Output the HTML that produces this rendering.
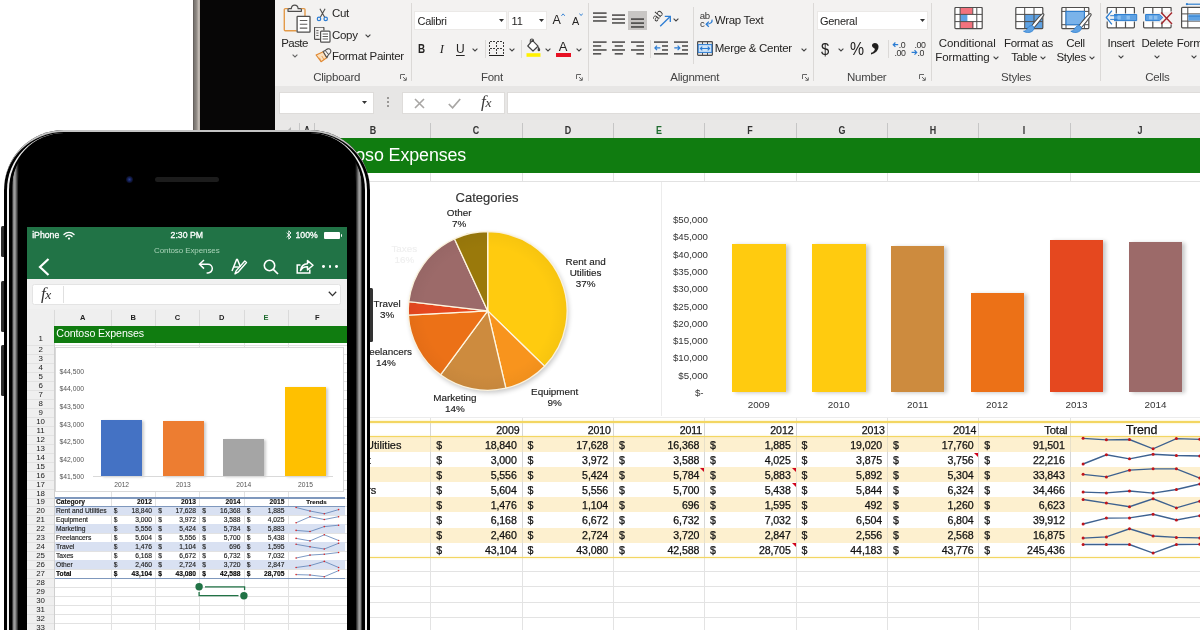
<!DOCTYPE html><html lang="en"><head><meta charset="utf-8"><title>Excel – Contoso Expenses</title><style>
*{box-sizing:border-box;margin:0;padding:0}
html,body{width:1200px;height:630px;overflow:hidden;background:#fff}
body{position:relative;font-family:"Liberation Sans",sans-serif;color:#222}
.abs{position:absolute}
#bezel{position:absolute;left:192.900px;top:0;width:83px;height:200px;background:#070606}
#bezel:before{content:"";position:absolute;left:0;top:0;width:7.600px;height:100%;background:linear-gradient(90deg,#4e4a48 0,#77726e 12%,#8b8681 45%,#a8a19b 65%,#c9c2bb 85%,#b5aea8 94%,#333 100%)}
#xl{will-change:transform;position:absolute;left:275px;top:0;width:925px;height:630px;background:#fff;overflow:hidden}
#ribbon{position:absolute;left:0;top:0;width:925px;height:86px;background:#f3f2f1}
#fbar{position:absolute;left:0;top:86px;width:925px;height:34px;background:#e7e6e5}
#colh{position:absolute;left:0;top:120px;width:925px;height:18px;background:#e9e8e7}
.rt{position:absolute;font-size:11.5px;letter-spacing:-.3px;color:#252423;white-space:nowrap;line-height:14px}
.rl{position:absolute;font-size:11.5px;letter-spacing:-.25px;color:#444;white-space:nowrap;line-height:14px;text-align:center;transform:translateX(-50%)}
.rc{position:absolute;font-size:11.5px;letter-spacing:-.3px;color:#252423;white-space:nowrap;line-height:14.6px;text-align:center;transform:translateX(-50%)}
.vsep{position:absolute;width:1px;background:#dbd9d7}
.box{position:absolute;background:#fff;border:1px solid #ebe9e7}
.ch{position:absolute;font-size:10.400px;color:#3a3a3a;transform:translateX(-50%) scaleX(.86);line-height:18px;top:2.300px;font-weight:bold;letter-spacing:-.2px}
.gl{position:absolute;background:#dcdcdc}
.num{position:absolute;font-size:10.6px;color:#111;white-space:nowrap;line-height:15px;letter-spacing:-.1px;margin-top:.9px;-webkit-text-stroke:.25px #111}
.cl{position:absolute;font-size:9.9px;color:#333;white-space:nowrap;line-height:11px;text-align:center;transform:translate(-50%,-50%)}
.pl{position:absolute;font-size:9.9px;color:#1a1a1a;-webkit-text-stroke:.15px;white-space:nowrap;line-height:11.1px;text-align:center;transform:translateX(-50%)}
#phone{position:absolute;left:4px;top:130px;width:366px;height:560px;border-radius:60px;background:#000}
#scr{will-change:transform;position:absolute;left:27px;top:227px;width:319.5px;height:410px;background:#fff;overflow:hidden}
.pt{position:absolute;white-space:nowrap}
.prn{position:absolute;left:0;width:27px;text-align:center;font-size:7.900px;color:#222;line-height:9px;letter-spacing:-.2px}
.pc{position:absolute;font-size:6.7px;line-height:9px;color:#222;white-space:nowrap;-webkit-text-stroke:.15px #222}
</style></head><body>
<div id="bezel"></div>
<div id="xl">
<div id="ribbon">
<div class="vsep" style="left:135.5px;top:3px;height:78px"></div>
<div class="vsep" style="left:313px;top:3px;height:78px"></div>
<div class="vsep" style="left:418.3px;top:7px;height:57px"></div>
<div class="vsep" style="left:538.3px;top:3px;height:78px"></div>
<div class="vsep" style="left:656.2px;top:3px;height:78px"></div>
<div class="vsep" style="left:825px;top:3px;height:78px"></div>
<div class="vsep" style="left:209.7px;top:40px;height:18px"></div>
<div class="vsep" style="left:245.7px;top:40px;height:18px"></div>
<div class="vsep" style="left:375px;top:40px;height:18px"></div>
<div class="vsep" style="left:613px;top:40px;height:18px"></div>
<svg class="abs" style="left:8px;top:3px" width="30" height="32" viewBox="0 0 30 32">
<path d="M5.500 5.600H2.300a1 1 0 0 0-1 1V26.700a1 1 0 0 0 1 1H13.500" fill="none" stroke="#e39a49" stroke-width="1.400"/>
<path d="M18 5.600h3a1 1 0 0 1 1 1V13" fill="none" stroke="#e39a49" stroke-width="1.400"/>
<path d="M5 8.300V6.600a1 1 0 0 1 1-1h2.300c.2-2.200 1.600-3.400 3.400-3.400s3.200 1.200 3.400 3.400h2.300a1 1 0 0 1 1 1V8.300z" fill="#f3f2f1" stroke="#4f4e4d" stroke-width="1.200" stroke-linejoin="round"/>
<rect x="14.100" y="13.400" width="12.900" height="15.700" rx=".6" fill="#fff" stroke="#4f4e4d" stroke-width="1.300"/>
<path d="M16.800 17.500h7.500M16.800 21.300h7.500M16.800 25.100h7.500" stroke="#605e5c" stroke-width="1.100"/>
</svg>
<div class="rc" style="left:19.5px;top:35.5px;letter-spacing:-.55px">Paste</div>
<svg class="abs" style="left:16.5px;top:54px" width="6" height="4" viewBox="0 0 6 4"><path d="M.6.6 3 3 5.4.6" fill="none" stroke="#666" stroke-width="1.1"/></svg>
<svg class="abs" style="left:41px;top:7.500px" width="13" height="14" viewBox="0 0 13 14">
<path d="M3.900.7 8.800 9.500M9.100.7 4.200 9.500" stroke="#4f4e4d" stroke-width="1.100" fill="none"/>
<circle cx="3" cy="10.900" r="1.700" fill="none" stroke="#2b7cd3" stroke-width="1.200"/><circle cx="9.700" cy="10.900" r="1.700" fill="none" stroke="#2b7cd3" stroke-width="1.200"/></svg>
<div class="rt" style="left:57px;top:6.3px">Cut</div>
<svg class="abs" style="left:39px;top:27px" width="17" height="16" viewBox="0 0 17 16">
<path d="M5.800 12.400H1.400a.9.900 0 0 1-.9-.9V1.100a.9.900 0 0 1 .9-.9H9a.9.900 0 0 1 .9.900V3.400" fill="none" stroke="#4f4e4d" stroke-width="1.200"/>
<rect x="6.600" y="4.100" width="9.400" height="11.100" rx=".9" fill="#fff" stroke="#4f4e4d" stroke-width="1.200"/>
<path d="M8.600 7h5.400M8.600 9.500h5.400M8.600 12h5.400" stroke="#605e5c" stroke-width="1"/>
<path d="M2.300 3.600h2.200M2.300 6h2.200M2.300 8.500h2.200" stroke="#605e5c" stroke-width="1"/></svg>
<div class="rt" style="left:57px;top:28.3px">Copy</div>
<svg class="abs" style="left:90px;top:33.5px" width="6" height="4" viewBox="0 0 6 4"><path d="M.6.6 3 3 5.4.6" fill="none" stroke="#444" stroke-width="1.1"/></svg>
<svg class="abs" style="left:40px;top:48px" width="17" height="15" viewBox="0 0 17 15">
<path d="M1.100 7 8.300 3.700 11.700 9.800 6.100 13.700z" fill="#fbe0bd" stroke="#e08a35" stroke-width="1.200" stroke-linejoin="round"/>
<path d="M4.500 9.800 6.100 13.700M6.800 8 9 11.700" stroke="#e08a35" stroke-width=".7"/>
<path d="M8.100 3.500 10.300 2.500C11.400.9 14.300.1 15.400 1.700 16.400 3.200 15.400 5.700 13.500 6.500L11.900 9.700z" fill="#f3f2f1" stroke="#4f4e4d" stroke-width="1.100" stroke-linejoin="round"/>
<path d="M10.300 2.500 13.500 6.500" stroke="#4f4e4d" stroke-width="1"/></svg>
<div class="rt" style="left:57px;top:49.3px">Format Painter</div>
<div class="rl" style="left:61.7px;top:70px">Clipboard</div>
<svg class="abs" style="left:124.80000000000001px;top:73.5px" width="7" height="7" viewBox="0 0 7 7"><path d="M.5 5V.5H5" fill="none" stroke="#666" stroke-width="1"/><path d="M3 3l3 3M6.3 3.4v2.9H3.4" fill="none" stroke="#666" stroke-width="1"/></svg>
<div class="box" style="left:139px;top:11px;width:93px;height:19px"></div>
<div class="box" style="left:233px;top:11px;width:38.5px;height:19px"></div>
<div class="rt" style="left:142.5px;top:13.5px;font-size:11px">Calibri</div>
<div class="rt" style="left:236.5px;top:13.5px;font-size:11px;letter-spacing:0">11</div>
<svg class="abs" style="left:223.5px;top:18.5px" width="5" height="3" viewBox="0 0 5 3"><path d="M0 0h5L2.5 3z" fill="#333"/></svg>
<svg class="abs" style="left:263.5px;top:18.5px" width="5" height="3" viewBox="0 0 5 3"><path d="M0 0h5L2.5 3z" fill="#333"/></svg>
<div class="rt" style="left:277.5px;top:11.5px;font-size:12.500px;letter-spacing:0;line-height:16px">A</div>
<svg class="abs" style="left:286px;top:12.500px" width="4.2" height="3.4" viewBox="0 0 5 4"><path d="M.5 3.4 2.5 1 4.5 3.4" fill="none" stroke="#2b7cd3" stroke-width="1.1"/></svg>
<div class="rt" style="left:297px;top:12.500px;font-size:10.800px;letter-spacing:0;line-height:16px">A</div>
<svg class="abs" style="left:304px;top:12.500px" width="4.2" height="3.4" viewBox="0 0 5 4"><path d="M.5.6 2.5 3 4.5.6" fill="none" stroke="#2b7cd3" stroke-width="1.1"/></svg>
<div class="rt" style="left:143.3px;top:41.5px;font-size:12.300px;font-weight:bold;letter-spacing:0;transform:scaleX(.8);transform-origin:0 0">B</div>
<div class="rt" style="left:164.8px;top:41.5px;font-size:12.5px;font-style:italic;letter-spacing:0;font-family:'Liberation Serif',serif">I</div>
<div class="rt" style="left:181px;top:41.5px;font-size:12px;letter-spacing:0;text-decoration:underline;text-underline-offset:2px">U</div>
<svg class="abs" style="left:197.3px;top:47.5px" width="6" height="4" viewBox="0 0 6 4"><path d="M.6.6 3 3 5.4.6" fill="none" stroke="#444" stroke-width="1.1"/></svg>
<svg class="abs" style="left:214px;top:41px" width="15" height="15" viewBox="0 0 15 15" shape-rendering="crispEdges">
<path d="M.5.5H14.500M.5.5V14M14.500.5V14M7.500.5V14M.5 7.500H14.500" fill="none" stroke="#3b3a39" stroke-width="1" stroke-dasharray="2 1.500"/>
<path d="M0 14.200H15" stroke="#201f1e" stroke-width="1.400"/></svg>
<svg class="abs" style="left:233.9px;top:47.5px" width="6" height="4" viewBox="0 0 6 4"><path d="M.6.6 3 3 5.4.6" fill="none" stroke="#444" stroke-width="1.1"/></svg>
<svg class="abs" style="left:251px;top:38px" width="16" height="20" viewBox="0 0 16 20">
<path d="M6.4 2.4 12 8.2 7 13 1.8 8z" fill="#fff" stroke="#444" stroke-width="1.2" stroke-linejoin="round"/>
<path d="M4.3 5.3V2.6a1.6 1.6 0 0 1 3.2 0v.6" fill="none" stroke="#444" stroke-width="1.1"/>
<path d="M12.4 8.6c1.2 1.6 1.8 2.6 1.8 3.4a1.3 1.3 0 0 1-2.6 0c0-.8.3-1.7.8-3.4z" fill="#444"/>
<rect x="0.5" y="15.2" width="14" height="3.6" fill="#fff100"/></svg>
<svg class="abs" style="left:270px;top:47.5px" width="6" height="4" viewBox="0 0 6 4"><path d="M.6.6 3 3 5.4.6" fill="none" stroke="#444" stroke-width="1.1"/></svg>
<div class="rt" style="left:283.8px;top:39px;font-size:13px;letter-spacing:0;line-height:15px">A</div>
<div class="abs" style="left:281px;top:53.2px;width:14.5px;height:3.6px;background:#e81123"></div>
<svg class="abs" style="left:300.8px;top:47.5px" width="6" height="4" viewBox="0 0 6 4"><path d="M.6.6 3 3 5.4.6" fill="none" stroke="#444" stroke-width="1.1"/></svg>
<div class="rl" style="left:216.9px;top:70px">Font</div>
<svg class="abs" style="left:300.8px;top:73.5px" width="7" height="7" viewBox="0 0 7 7"><path d="M.5 5V.5H5" fill="none" stroke="#666" stroke-width="1"/><path d="M3 3l3 3M6.3 3.4v2.9H3.4" fill="none" stroke="#666" stroke-width="1"/></svg>
<div class="abs" style="left:353px;top:10.5px;width:19px;height:19px;background:#c8c6c4"></div>
<svg class="abs" style="left:318.20px;top:10.90px" width="13.6" height="11.9" viewBox="0 0 13.6 11.9"><rect x="0" y="1.45" width="13.6" height="1.250" fill="#252423"/><rect x="0" y="5.45" width="13.6" height="1.250" fill="#252423"/><rect x="0" y="9.35" width="13.6" height="1.250" fill="#252423"/></svg>
<svg class="abs" style="left:336.90px;top:13.00px" width="13.6" height="11.9" viewBox="0 0 13.6 11.9"><rect x="0" y="1.45" width="13.6" height="1.250" fill="#252423"/><rect x="0" y="5.45" width="13.6" height="1.250" fill="#252423"/><rect x="0" y="9.35" width="13.6" height="1.250" fill="#252423"/></svg>
<svg class="abs" style="left:355.50px;top:16.60px" width="13.6" height="11.9" viewBox="0 0 13.6 11.9"><rect x="0" y="1.45" width="13.6" height="1.250" fill="#252423"/><rect x="0" y="5.45" width="13.6" height="1.250" fill="#252423"/><rect x="0" y="9.35" width="13.6" height="1.250" fill="#252423"/></svg>
<svg class="abs" style="left:318.20px;top:40.10px" width="13.6" height="15.8" viewBox="0 0 13.6 15.8"><rect x="0" y="1.45" width="13.6" height="1.250" fill="#252423"/><rect x="0" y="5.35" width="8.2" height="1.250" fill="#252423"/><rect x="0" y="9.35" width="13.6" height="1.250" fill="#252423"/><rect x="0" y="13.25" width="8.2" height="1.250" fill="#252423"/></svg>
<svg class="abs" style="left:336.90px;top:40.10px" width="13.6" height="15.8" viewBox="0 0 13.6 15.8"><rect x="0" y="1.45" width="13.6" height="1.250" fill="#252423"/><rect x="2.7" y="5.35" width="8.2" height="1.250" fill="#252423"/><rect x="0" y="9.35" width="13.6" height="1.250" fill="#252423"/><rect x="2.7" y="13.25" width="8.2" height="1.250" fill="#252423"/></svg>
<svg class="abs" style="left:355.50px;top:40.10px" width="13.6" height="15.8" viewBox="0 0 13.6 15.8"><rect x="0" y="1.45" width="13.6" height="1.250" fill="#252423"/><rect x="5.4" y="5.35" width="8.2" height="1.250" fill="#252423"/><rect x="0" y="9.35" width="13.6" height="1.250" fill="#252423"/><rect x="5.4" y="13.25" width="8.2" height="1.250" fill="#252423"/></svg>
<svg class="abs" style="left:377px;top:9px" width="20" height="20" viewBox="0 0 20 20">
<text x="0" y="0" font-family="Liberation Sans,sans-serif" font-size="10.500" fill="#323130" transform="translate(4.200 13.300) rotate(-50)">ab</text>
<path d="M8.200 17.300 17.700 8" stroke="#2b7cd3" stroke-width="1.300" fill="none"/><path d="M12.800 7.400h5.500v5.500" stroke="#2b7cd3" stroke-width="1.300" fill="none"/></svg>
<svg class="abs" style="left:397.5px;top:18px" width="6" height="4" viewBox="0 0 6 4"><path d="M.6.6 3 3 5.4.6" fill="none" stroke="#444" stroke-width="1.1"/></svg>
<svg class="abs" style="left:379.3px;top:40.1px" width="14" height="16" viewBox="0 0 14 16"><rect x="0" y="1.450" width="14" height="1.250" fill="#252423"/><rect x="0" y="13.250" width="14" height="1.250" fill="#252423"/><rect x="8" y="5.350" width="6" height="1.250" fill="#252423"/><rect x="8" y="9.350" width="6" height="1.250" fill="#252423"/><path d="M6.300 7.900H.9M3 5.700.9 7.900 3 10.100" fill="none" stroke="#2b7cd3" stroke-width="1.200"/></svg>
<svg class="abs" style="left:398.8px;top:40.1px" width="14" height="16" viewBox="0 0 14 16"><rect x="0" y="1.450" width="14" height="1.250" fill="#252423"/><rect x="0" y="13.250" width="14" height="1.250" fill="#252423"/><rect x="8" y="5.350" width="6" height="1.250" fill="#252423"/><rect x="8" y="9.350" width="6" height="1.250" fill="#252423"/><path d="M.3 7.900H5.800M3.600 5.700 5.800 7.900 3.600 10.100" fill="none" stroke="#2b7cd3" stroke-width="1.200"/></svg>
<svg class="abs" style="left:424px;top:11px" width="17" height="18" viewBox="0 0 17 18">
<text x="0.700" y="8.400" font-family="Liberation Sans,sans-serif" font-size="9.600" fill="#323130" letter-spacing="-.3">ab</text>
<text x="0.900" y="15.600" font-family="Liberation Sans,sans-serif" font-size="9.600" fill="#323130">c</text>
<path d="M13 8.600c.6 2.600-1.600 4.600-5.600 4.600" fill="none" stroke="#2b7cd3" stroke-width="1.300"/><path d="M9.800 10.600 7.200 13.200 9.800 15.800" fill="none" stroke="#2b7cd3" stroke-width="1.300"/></svg>
<div class="rt" style="left:439.8px;top:13px">Wrap Text</div>
<svg class="abs" style="left:421.5px;top:41px" width="16" height="15" viewBox="0 0 16 15">
<rect x=".6" y=".6" width="14.800" height="13.800" rx=".8" fill="#e8e6e4" stroke="#4f4e4d" stroke-width="1.200"/>
<path d="M5.500.6V3.600M10.500.6V3.600M5.500 11.400v3M10.500 11.400v3" stroke="#4f4e4d" stroke-width="1"/>
<rect x="1.200" y="3.600" width="13.600" height="7.800" fill="#cfe4f8" stroke="#2b7cd3" stroke-width="1"/>
<path d="M3.400 7.500h9.200M5.300 5.700 3.400 7.500 5.300 9.300M10.700 5.700 12.600 7.500 10.700 9.300" fill="none" stroke="#2b7cd3" stroke-width="1.100"/></svg>
<div class="rt" style="left:439.8px;top:41.3px">Merge &amp; Center</div>
<svg class="abs" style="left:525.5px;top:47.5px" width="6" height="4" viewBox="0 0 6 4"><path d="M.6.6 3 3 5.4.6" fill="none" stroke="#444" stroke-width="1.1"/></svg>
<div class="rl" style="left:419.7px;top:70px">Alignment</div>
<svg class="abs" style="left:526.8px;top:73.5px" width="7" height="7" viewBox="0 0 7 7"><path d="M.5 5V.5H5" fill="none" stroke="#666" stroke-width="1"/><path d="M3 3l3 3M6.3 3.4v2.9H3.4" fill="none" stroke="#666" stroke-width="1"/></svg>
<div class="box" style="left:542.3px;top:11px;width:110.5px;height:19px"></div>
<div class="rt" style="left:545px;top:13.5px;font-size:11px">General</div>
<svg class="abs" style="left:645.0px;top:18.5px" width="5" height="3" viewBox="0 0 5 3"><path d="M0 0h5L2.5 3z" fill="#333"/></svg>
<div class="rt" style="left:546px;top:38.5px;font-size:16.500px;letter-spacing:0;line-height:20px;transform:scaleX(.9);transform-origin:0 0">$</div>
<svg class="abs" style="left:563.3px;top:47.5px" width="6" height="4" viewBox="0 0 6 4"><path d="M.6.6 3 3 5.4.6" fill="none" stroke="#444" stroke-width="1.1"/></svg>
<div class="rt" style="left:574.7px;top:38.5px;font-size:18px;letter-spacing:0;line-height:20px;transform:scaleX(.88);transform-origin:0 0">%</div>
<div class="rt" style="left:595.5px;top:17px;font-size:38px;letter-spacing:0;line-height:38px;font-family:'Liberation Serif',serif;font-weight:bold;color:#201f1e">,</div>
<svg class="abs" style="left:617px;top:40.5px" width="17" height="16" viewBox="0 0 17 16"><path d="M6.200 3.700H1.300M3.400 1.500 1.200 3.700 3.400 5.900" fill="none" stroke="#2b7cd3" stroke-width="1.200"/><text x="6.800" y="6.900" font-family="Liberation Sans,sans-serif" font-size="8.800" fill="#323130" letter-spacing="-.4">.0</text><text x="2.400" y="14.600" font-family="Liberation Sans,sans-serif" font-size="8.800" fill="#323130" letter-spacing="-.4">.00</text></svg>
<svg class="abs" style="left:635.7px;top:40.5px" width="17" height="16" viewBox="0 0 17 16"><text x="3.400" y="6.900" font-family="Liberation Sans,sans-serif" font-size="8.800" fill="#323130" letter-spacing="-.4">.00</text><path d="M.6 11.400H5.600M3.500 9.200 5.700 11.400 3.500 13.600" fill="none" stroke="#2b7cd3" stroke-width="1.200"/><text x="6.400" y="14.600" font-family="Liberation Sans,sans-serif" font-size="8.800" fill="#323130" letter-spacing="-.4">.0</text></svg>
<div class="rl" style="left:591.7px;top:70px">Number</div>
<svg class="abs" style="left:644.2px;top:73.5px" width="7" height="7" viewBox="0 0 7 7"><path d="M.5 5V.5H5" fill="none" stroke="#666" stroke-width="1"/><path d="M3 3l3 3M6.3 3.4v2.9H3.4" fill="none" stroke="#666" stroke-width="1"/></svg>
<svg class="abs" style="left:679px;top:7px" width="29" height="23" viewBox="0 0 29 23">
<rect x=".9" y=".4" width="27.300" height="21.300" fill="#fff"/>
<rect x="6.1" y=".8" width="12.700" height="6.600" fill="#f2727d"/><rect x="6.1" y="7.4" width="7.300" height="7.200" fill="#5fa2e3"/><rect x="6.1" y="14.6" width="13.300" height="6.800" fill="#f2727d"/>
<path d="M.9 7.400h27.300M.9 14.600h27.300M6.100.4v21.300M22.800.4v21.300" stroke="#4f4e4d" stroke-width="1"/><path d="M18.800.4v7M18.800 14.600v7" stroke="#4f4e4d" stroke-width=".9"/>
<rect x=".9" y=".4" width="27.300" height="21.300" rx="1" fill="none" stroke="#4f4e4d" stroke-width="1.200"/></svg>
<div class="rc" style="left:692.2px;top:35.5px;letter-spacing:-.05px">Conditional<br>Formatting&nbsp;&nbsp;&nbsp;</div>
<svg class="abs" style="left:717.5px;top:55.5px" width="6" height="4" viewBox="0 0 6 4"><path d="M.6.6 3 3 5.4.6" fill="none" stroke="#444" stroke-width="1.1"/></svg>
<svg class="abs" style="left:740px;top:7px" width="32" height="27" viewBox="0 0 32 27">
<rect x=".8" y=".4" width="27" height="21.300" fill="#fff"/>
<rect x="9.700" y="7.400" width="18" height="14.300" fill="#5fa2e3"/>
<path d="M.8 7.400h27M.8 14.600h27M9.700.4v21.300M19 .4v21.300" stroke="#4f4e4d" stroke-width="1"/>
<rect x=".8" y=".4" width="27" height="21.300" rx="1" fill="none" stroke="#4f4e4d" stroke-width="1.200"/><g transform="translate(0 0)"><path d="M27.300 6.900c.9-.7 2 .3 1.400 1.300C26 12.500 22.500 17 18.800 21l-2.300-2C19.500 14.800 23.500 10 27.300 6.900z" fill="#fff" stroke="#4f4e4d" stroke-width="1.100" stroke-linejoin="round"/><path d="M16.300 18.600c1.300-.2 2.600.9 2.700 2.300.2 2.600-3 4.800-6.400 4.600-1.600-.1-3-.5-4.100-1.300 1.800-.2 3-.9 3.700-2.300.8-1.700 2-3 4.100-3.300z" fill="#5fa2e3" stroke="#2f7fd0" stroke-width=".8"/></g></svg>
<div class="rc" style="left:753.5px;top:35.5px">Format as<br>Table&nbsp;&nbsp;&nbsp;</div>
<svg class="abs" style="left:764.5px;top:55.5px" width="6" height="4" viewBox="0 0 6 4"><path d="M.6.6 3 3 5.4.6" fill="none" stroke="#444" stroke-width="1.1"/></svg>
<svg class="abs" style="left:786px;top:7px" width="33" height="27" viewBox="0 0 33 27">
<rect x=".8" y=".4" width="27" height="21.300" fill="#fff"/>
<path d="M.8 4.400h27M.8 17.700h27M5 .4v21.300M23.400.4v21.300" stroke="#4f4e4d" stroke-width="1"/>
<rect x="5" y="4.400" width="18.400" height="13.300" fill="#7ab3ea" stroke="#2f7fd0" stroke-width="1.100"/>
<rect x=".8" y=".4" width="27" height="21.300" rx="1" fill="none" stroke="#4f4e4d" stroke-width="1.200"/><g transform="translate(1.3 0)"><path d="M27.300 6.900c.9-.7 2 .3 1.400 1.300C26 12.500 22.500 17 18.800 21l-2.300-2C19.500 14.800 23.500 10 27.300 6.900z" fill="#fff" stroke="#4f4e4d" stroke-width="1.100" stroke-linejoin="round"/><path d="M16.300 18.600c1.300-.2 2.600.9 2.700 2.300.2 2.600-3 4.800-6.400 4.600-1.600-.1-3-.5-4.100-1.300 1.800-.2 3-.9 3.700-2.300.8-1.700 2-3 4.100-3.300z" fill="#5fa2e3" stroke="#2f7fd0" stroke-width=".8"/></g></svg>
<div class="rc" style="left:800.5px;top:35.5px">Cell<br>Styles&nbsp;&nbsp;&nbsp;</div>
<svg class="abs" style="left:813.5px;top:55.5px" width="6" height="4" viewBox="0 0 6 4"><path d="M.6.6 3 3 5.4.6" fill="none" stroke="#444" stroke-width="1.1"/></svg>
<div class="rl" style="left:741px;top:70px">Styles</div>
<svg class="abs" style="left:830px;top:7px" width="33" height="22" viewBox="0 0 33 22">
<path d="M2.200 6.400V1.300a1 1 0 0 1 1-1H28.400a1 1 0 0 1 1 1V6.400M11.300.3V6.400M20.500.3V6.400" fill="#fff" stroke="#4f4e4d" stroke-width="1.200"/>
<path d="M2.200 14.600v5.200a1 1 0 0 0 1 1H28.400a1 1 0 0 0 1-1V14.600M11.300 14.600v6.200M20.500 14.600v6.200" fill="#fff" stroke="#4f4e4d" stroke-width="1.200"/>
<rect x="9" y="7.500" width="22.700" height="6.100" fill="#5fa2e3"/><rect x="12.300" y="8.700" width="3.400" height="3.700" fill="#8cc0f0"/><rect x="21.500" y="8.700" width="3.400" height="3.700" fill="#8cc0f0"/>
<path d="M9 7.500H31.700V13.600H9" fill="none" stroke="#2f7fd0" stroke-width="1"/>
<path d="M12.500 8.700H5.200M12.500 12.400H5.200" stroke="#2f7fd0" stroke-width="1"/>
<path d="M6.900 3.700 1.300 10.500 6.900 17.300" fill="none" stroke="#2f7fd0" stroke-width="1.300" stroke-linejoin="round"/></svg>
<div class="rc" style="left:846px;top:35.5px">Insert</div>
<svg class="abs" style="left:843px;top:54.7px" width="6" height="4" viewBox="0 0 6 4"><path d="M.6.6 3 3 5.4.6" fill="none" stroke="#444" stroke-width="1.1"/></svg>
<svg class="abs" style="left:868px;top:7px" width="31" height="22" viewBox="0 0 31 22">
<path d="M.6 6.400V1.300a1 1 0 0 1 1-1H27.100a1 1 0 0 1 1 1V4.500M9.800.3V6.400M19 .3V6.400" fill="#fff" stroke="#4f4e4d" stroke-width="1.200"/>
<path d="M.6 14.600v5.200a1 1 0 0 0 1 1H27.100a1 1 0 0 0 1-1V17.500M9.800 14.600v6.200M19 14.600v6.200" fill="#fff" stroke="#4f4e4d" stroke-width="1.200"/>
<path d="M2.600 7.500H16.600L19.800 10.500 16.600 13.600H2.600z" fill="#5fa2e3" stroke="#2f7fd0" stroke-width="1"/><rect x="6" y="8.700" width="3.400" height="3.700" fill="#8cc0f0"/><rect x="11" y="8.700" width="3.400" height="3.700" fill="#8cc0f0"/>
<path d="M18.200 5.600 29 16.900M29 5.600 18.200 16.900" fill="none" stroke="#a4262c" stroke-width="1.400"/></svg>
<div class="rc" style="left:882.3px;top:35.5px">Delete</div>
<svg class="abs" style="left:879.3px;top:54.7px" width="6" height="4" viewBox="0 0 6 4"><path d="M.6.6 3 3 5.4.6" fill="none" stroke="#444" stroke-width="1.1"/></svg>
<svg class="abs" style="left:906px;top:2px" width="20" height="27" viewBox="0 0 20 27">
<path d="M6 2.200H20" stroke="#2f7fd0" stroke-width="1.200"/><circle cx="5.900" cy="2.200" r="1.100" fill="#2f7fd0"/>
<path d="M20 5.300H1.600a1 1 0 0 0-1 1V24.800a1 1 0 0 0 1 1H20" fill="#fff" stroke="#4f4e4d" stroke-width="1.200"/>
<path d="M6.800 5.300V25.800M.6 11.900H20M.6 19.100H20" stroke="#4f4e4d" stroke-width="1"/><rect x="7.300" y="12.400" width="13" height="6.200" fill="#5fa2e3"/><path d="M7.300 14.200H20" stroke="#2f7fd0" stroke-width=".8"/></svg>
<div class="rt" style="left:901.8px;top:35.5px;line-height:14.6px">Format</div>
<svg class="abs" style="left:916px;top:54.7px" width="6" height="4" viewBox="0 0 6 4"><path d="M.6.6 3 3 5.4.6" fill="none" stroke="#444" stroke-width="1.1"/></svg>
<div class="rl" style="left:882.3px;top:70px">Cells</div>
</div>
<div id="fbar">
<div class="box" style="left:4.3px;top:5.5px;width:94.5px;height:22px;border-color:#dedcda"></div>
<svg class="abs" style="left:86.5px;top:15.0px" width="5" height="3" viewBox="0 0 5 3"><path d="M0 0h5L2.5 3z" fill="#333"/></svg>
<div class="abs" style="left:111.8px;top:11px;width:2px;height:2px;background:#9a9896;box-shadow:0 4px 0 #9a9896,0 8px 0 #9a9896"></div>
<div class="box" style="left:127px;top:5.5px;width:102.5px;height:22px;border-color:#dedcda"></div>
<svg class="abs" style="left:138.5px;top:11.500px" width="11" height="11" viewBox="0 0 11 11"><path d="M1 1l9 9M10 1 1 10" stroke="#a8a6a4" stroke-width="1.600"/></svg>
<svg class="abs" style="left:172.5px;top:11.500px" width="13" height="11" viewBox="0 0 13 11"><path d="M.8 6 4.600 9.800 12.200 1" fill="none" stroke="#a8a6a4" stroke-width="1.700"/></svg>
<div class="abs" style="left:206px;top:6px;font-family:'Liberation Serif',serif;font-style:italic;font-size:17px;line-height:20px;color:#3b3a39">f<span style="font-size:13.500px;margin-left:-.2px">x</span></div>
<div class="box" style="left:232.3px;top:5.5px;width:700px;height:22px;border-color:#dedcda"></div>
</div>
<div id="colh">
<div class="abs" style="left:23.5px;top:3px;width:1px;height:15px;background:#c6c6c6"></div>
<div class="ch" style="left:31.9px;color:#333">A</div>
<div class="abs" style="left:39.3px;top:3px;width:1px;height:15px;background:#c6c6c6"></div>
<div class="ch" style="left:97.8px;color:#333">B</div>
<div class="abs" style="left:155.3px;top:3px;width:1px;height:15px;background:#c6c6c6"></div>
<div class="ch" style="left:201.4px;color:#333">C</div>
<div class="abs" style="left:246.5px;top:3px;width:1px;height:15px;background:#c6c6c6"></div>
<div class="ch" style="left:292.7px;color:#333">D</div>
<div class="abs" style="left:337.9px;top:3px;width:1px;height:15px;background:#c6c6c6"></div>
<div class="ch" style="left:384.0px;color:#1e6b2e">E</div>
<div class="abs" style="left:429.1px;top:3px;width:1px;height:15px;background:#c6c6c6"></div>
<div class="ch" style="left:475.3px;color:#333">F</div>
<div class="abs" style="left:520.5px;top:3px;width:1px;height:15px;background:#c6c6c6"></div>
<div class="ch" style="left:566.7px;color:#333">G</div>
<div class="abs" style="left:611.9px;top:3px;width:1px;height:15px;background:#c6c6c6"></div>
<div class="ch" style="left:658.1px;color:#333">H</div>
<div class="abs" style="left:703.3px;top:3px;width:1px;height:15px;background:#c6c6c6"></div>
<div class="ch" style="left:749.4px;color:#333">I</div>
<div class="abs" style="left:794.5px;top:3px;width:1px;height:15px;background:#c6c6c6"></div>
<div class="ch" style="left:865.0px;color:#333">J</div>
<div class="abs" style="left:934.5px;top:3px;width:1px;height:15px;background:#c6c6c6"></div>
<svg class="abs" style="left:7px;top:7px" width="9" height="9" viewBox="0 0 9 9"><path d="M9 0v9H0z" fill="#b5b5b5"/></svg>
</div>
<div class="abs" style="left:0;top:138px;width:925px;height:34.500px;background:#107c10"></div>
<div class="abs" style="left:43px;top:145.400px;font-size:17.850px;line-height:20px;color:#fff;white-space:nowrap;letter-spacing:-.1px">Contoso Expenses</div>
<div class="gl" style="left:0;top:181px;width:925px;height:1px;background:#e2e2e2"></div>
<div class="gl" style="left:39.3px;top:172.500px;width:1px;height:9px;background:#e2e2e2"></div>
<div class="gl" style="left:155.3px;top:172.500px;width:1px;height:9px;background:#e2e2e2"></div>
<div class="gl" style="left:246.5px;top:172.500px;width:1px;height:9px;background:#e2e2e2"></div>
<div class="gl" style="left:337.9px;top:172.500px;width:1px;height:9px;background:#e2e2e2"></div>
<div class="gl" style="left:429.1px;top:172.500px;width:1px;height:9px;background:#e2e2e2"></div>
<div class="gl" style="left:520.5px;top:172.500px;width:1px;height:9px;background:#e2e2e2"></div>
<div class="gl" style="left:611.9px;top:172.500px;width:1px;height:9px;background:#e2e2e2"></div>
<div class="gl" style="left:703.3px;top:172.500px;width:1px;height:9px;background:#e2e2e2"></div>
<div class="gl" style="left:794.5px;top:172.500px;width:1px;height:9px;background:#e2e2e2"></div>
<div class="gl" style="left:385.5px;top:182px;width:1px;height:234px;background:#ececec"></div>
<div class="gl" style="left:39.3px;top:416.500px;width:1px;height:214px;background:#e3e3e3"></div>
<div class="gl" style="left:155.3px;top:416.500px;width:1px;height:214px;background:#e3e3e3"></div>
<div class="gl" style="left:246.5px;top:416.500px;width:1px;height:214px;background:#e3e3e3"></div>
<div class="gl" style="left:337.9px;top:416.500px;width:1px;height:214px;background:#e3e3e3"></div>
<div class="gl" style="left:429.1px;top:416.500px;width:1px;height:214px;background:#e3e3e3"></div>
<div class="gl" style="left:520.5px;top:416.500px;width:1px;height:214px;background:#e3e3e3"></div>
<div class="gl" style="left:611.9px;top:416.500px;width:1px;height:214px;background:#e3e3e3"></div>
<div class="gl" style="left:703.3px;top:416.500px;width:1px;height:214px;background:#e3e3e3"></div>
<div class="gl" style="left:794.5px;top:416.500px;width:1px;height:214px;background:#e3e3e3"></div>
<div class="gl" style="left:0;top:416.500px;width:925px;height:1px;background:#ececec"></div>
<div class="gl" style="left:0;top:571.3px;width:925px;height:1px;background:#e3e3e3"></div>
<div class="gl" style="left:0;top:586.4px;width:925px;height:1px;background:#e3e3e3"></div>
<div class="gl" style="left:0;top:601.6px;width:925px;height:1px;background:#e3e3e3"></div>
<div class="gl" style="left:0;top:616.8px;width:925px;height:1px;background:#e3e3e3"></div>
<div class="abs" style="left:0;top:437.10px;width:925px;height:15.07px;background:#fdf0cf"></div>
<div class="abs" style="left:0;top:467.24px;width:925px;height:15.07px;background:#fdf0cf"></div>
<div class="abs" style="left:0;top:497.38px;width:925px;height:15.07px;background:#fdf0cf"></div>
<div class="abs" style="left:0;top:527.52px;width:925px;height:15.07px;background:#fdf0cf"></div>
<div class="gl" style="left:39.3px;top:422px;width:1px;height:135px;background:rgba(190,190,190,.32)"></div>
<div class="gl" style="left:155.3px;top:422px;width:1px;height:135px;background:rgba(190,190,190,.32)"></div>
<div class="gl" style="left:246.5px;top:422px;width:1px;height:135px;background:rgba(190,190,190,.32)"></div>
<div class="gl" style="left:337.9px;top:422px;width:1px;height:135px;background:rgba(190,190,190,.32)"></div>
<div class="gl" style="left:429.1px;top:422px;width:1px;height:135px;background:rgba(190,190,190,.32)"></div>
<div class="gl" style="left:520.5px;top:422px;width:1px;height:135px;background:rgba(190,190,190,.32)"></div>
<div class="gl" style="left:611.9px;top:422px;width:1px;height:135px;background:rgba(190,190,190,.32)"></div>
<div class="gl" style="left:703.3px;top:422px;width:1px;height:135px;background:rgba(190,190,190,.32)"></div>
<div class="gl" style="left:794.5px;top:422px;width:1px;height:135px;background:rgba(190,190,190,.32)"></div>
<div class="abs" style="left:0;top:421px;width:925px;height:1.600px;background:#f3d662;box-shadow:0 0 2px rgba(246,222,120,.75)"></div>
<div class="abs" style="left:0;top:435.800px;width:925px;height:1.600px;background:#f3d662;box-shadow:0 0 2px rgba(246,222,120,.75)"></div>
<div class="abs" style="left:0;top:556.700px;width:925px;height:1.600px;background:#f3d662;box-shadow:0 0 2px rgba(246,222,120,.75)"></div>
<div class="num" style="right:680.5px;top:422px">2009</div>
<div class="num" style="right:589.1px;top:422px">2010</div>
<div class="num" style="right:497.9px;top:422px">2011</div>
<div class="num" style="right:406.5px;top:422px">2012</div>
<div class="num" style="right:315.1px;top:422px">2013</div>
<div class="num" style="right:223.70000000000005px;top:422px">2014</div>
<div class="num" style="right:132.5px;top:422px;font-size:11.300px">Total</div>
<div class="num" style="left:866.7px;top:422px;transform:translateX(-50%);font-size:12.400px">Trend</div>
<div class="abs" style="left:43.3px;top:437.90px;font-size:11px;line-height:15px;color:#111;white-space:nowrap;-webkit-text-stroke:.2px #111">Rent and Utilities</div>
<div class="num" style="left:161.3px;top:437.10px">$</div>
<div class="num" style="right:683.3px;top:437.10px">18,840</div>
<div class="num" style="left:252.5px;top:437.10px">$</div>
<div class="num" style="right:591.9px;top:437.10px">17,628</div>
<div class="num" style="left:343.9px;top:437.10px">$</div>
<div class="num" style="right:500.7px;top:437.10px">16,368</div>
<div class="num" style="left:435.1px;top:437.10px">$</div>
<div class="num" style="right:409.3px;top:437.10px">1,885</div>
<div class="num" style="left:526.5px;top:437.10px">$</div>
<div class="num" style="right:317.90000000000003px;top:437.10px">19,020</div>
<div class="num" style="left:617.9px;top:437.10px">$</div>
<div class="num" style="right:226.50000000000006px;top:437.10px">17,760</div>
<div class="num" style="left:709.3px;top:437.10px">$</div>
<div class="num" style="right:135.3px;top:437.10px">91,501</div>
<div class="abs" style="left:43.3px;top:452.97px;font-size:11px;line-height:15px;color:#111;white-space:nowrap;-webkit-text-stroke:.2px #111">Equipment</div>
<div class="num" style="left:161.3px;top:452.17px">$</div>
<div class="num" style="right:683.3px;top:452.17px">3,000</div>
<div class="num" style="left:252.5px;top:452.17px">$</div>
<div class="num" style="right:591.9px;top:452.17px">3,972</div>
<div class="num" style="left:343.9px;top:452.17px">$</div>
<div class="num" style="right:500.7px;top:452.17px">3,588</div>
<div class="num" style="left:435.1px;top:452.17px">$</div>
<div class="num" style="right:409.3px;top:452.17px">4,025</div>
<div class="num" style="left:526.5px;top:452.17px">$</div>
<div class="num" style="right:317.90000000000003px;top:452.17px">3,875</div>
<div class="num" style="left:617.9px;top:452.17px">$</div>
<div class="num" style="right:226.50000000000006px;top:452.17px">3,756</div>
<div class="num" style="left:709.3px;top:452.17px">$</div>
<div class="num" style="right:135.3px;top:452.17px">22,216</div>
<div class="abs" style="left:43.3px;top:468.04px;font-size:11px;line-height:15px;color:#111;white-space:nowrap;-webkit-text-stroke:.2px #111">Marketing</div>
<div class="num" style="left:161.3px;top:467.24px">$</div>
<div class="num" style="right:683.3px;top:467.24px">5,556</div>
<div class="num" style="left:252.5px;top:467.24px">$</div>
<div class="num" style="right:591.9px;top:467.24px">5,424</div>
<div class="num" style="left:343.9px;top:467.24px">$</div>
<div class="num" style="right:500.7px;top:467.24px">5,784</div>
<div class="num" style="left:435.1px;top:467.24px">$</div>
<div class="num" style="right:409.3px;top:467.24px">5,883</div>
<div class="num" style="left:526.5px;top:467.24px">$</div>
<div class="num" style="right:317.90000000000003px;top:467.24px">5,892</div>
<div class="num" style="left:617.9px;top:467.24px">$</div>
<div class="num" style="right:226.50000000000006px;top:467.24px">5,304</div>
<div class="num" style="left:709.3px;top:467.24px">$</div>
<div class="num" style="right:135.3px;top:467.24px">33,843</div>
<div class="abs" style="left:43.3px;top:483.11px;font-size:11px;line-height:15px;color:#111;white-space:nowrap;-webkit-text-stroke:.2px #111">Freelancers</div>
<div class="num" style="left:161.3px;top:482.31px">$</div>
<div class="num" style="right:683.3px;top:482.31px">5,604</div>
<div class="num" style="left:252.5px;top:482.31px">$</div>
<div class="num" style="right:591.9px;top:482.31px">5,556</div>
<div class="num" style="left:343.9px;top:482.31px">$</div>
<div class="num" style="right:500.7px;top:482.31px">5,700</div>
<div class="num" style="left:435.1px;top:482.31px">$</div>
<div class="num" style="right:409.3px;top:482.31px">5,438</div>
<div class="num" style="left:526.5px;top:482.31px">$</div>
<div class="num" style="right:317.90000000000003px;top:482.31px">5,844</div>
<div class="num" style="left:617.9px;top:482.31px">$</div>
<div class="num" style="right:226.50000000000006px;top:482.31px">6,324</div>
<div class="num" style="left:709.3px;top:482.31px">$</div>
<div class="num" style="right:135.3px;top:482.31px">34,466</div>
<div class="abs" style="left:43.3px;top:498.18px;font-size:11px;line-height:15px;color:#111;white-space:nowrap;-webkit-text-stroke:.2px #111">Travel</div>
<div class="num" style="left:161.3px;top:497.38px">$</div>
<div class="num" style="right:683.3px;top:497.38px">1,476</div>
<div class="num" style="left:252.5px;top:497.38px">$</div>
<div class="num" style="right:591.9px;top:497.38px">1,104</div>
<div class="num" style="left:343.9px;top:497.38px">$</div>
<div class="num" style="right:500.7px;top:497.38px">696</div>
<div class="num" style="left:435.1px;top:497.38px">$</div>
<div class="num" style="right:409.3px;top:497.38px">1,595</div>
<div class="num" style="left:526.5px;top:497.38px">$</div>
<div class="num" style="right:317.90000000000003px;top:497.38px">492</div>
<div class="num" style="left:617.9px;top:497.38px">$</div>
<div class="num" style="right:226.50000000000006px;top:497.38px">1,260</div>
<div class="num" style="left:709.3px;top:497.38px">$</div>
<div class="num" style="right:135.3px;top:497.38px">6,623</div>
<div class="abs" style="left:43.3px;top:513.25px;font-size:11px;line-height:15px;color:#111;white-space:nowrap;-webkit-text-stroke:.2px #111">Taxes</div>
<div class="num" style="left:161.3px;top:512.45px">$</div>
<div class="num" style="right:683.3px;top:512.45px">6,168</div>
<div class="num" style="left:252.5px;top:512.45px">$</div>
<div class="num" style="right:591.9px;top:512.45px">6,672</div>
<div class="num" style="left:343.9px;top:512.45px">$</div>
<div class="num" style="right:500.7px;top:512.45px">6,732</div>
<div class="num" style="left:435.1px;top:512.45px">$</div>
<div class="num" style="right:409.3px;top:512.45px">7,032</div>
<div class="num" style="left:526.5px;top:512.45px">$</div>
<div class="num" style="right:317.90000000000003px;top:512.45px">6,504</div>
<div class="num" style="left:617.9px;top:512.45px">$</div>
<div class="num" style="right:226.50000000000006px;top:512.45px">6,804</div>
<div class="num" style="left:709.3px;top:512.45px">$</div>
<div class="num" style="right:135.3px;top:512.45px">39,912</div>
<div class="abs" style="left:43.3px;top:528.32px;font-size:11px;line-height:15px;color:#111;white-space:nowrap;-webkit-text-stroke:.2px #111">Other</div>
<div class="num" style="left:161.3px;top:527.52px">$</div>
<div class="num" style="right:683.3px;top:527.52px">2,460</div>
<div class="num" style="left:252.5px;top:527.52px">$</div>
<div class="num" style="right:591.9px;top:527.52px">2,724</div>
<div class="num" style="left:343.9px;top:527.52px">$</div>
<div class="num" style="right:500.7px;top:527.52px">3,720</div>
<div class="num" style="left:435.1px;top:527.52px">$</div>
<div class="num" style="right:409.3px;top:527.52px">2,847</div>
<div class="num" style="left:526.5px;top:527.52px">$</div>
<div class="num" style="right:317.90000000000003px;top:527.52px">2,556</div>
<div class="num" style="left:617.9px;top:527.52px">$</div>
<div class="num" style="right:226.50000000000006px;top:527.52px">2,568</div>
<div class="num" style="left:709.3px;top:527.52px">$</div>
<div class="num" style="right:135.3px;top:527.52px">16,875</div>
<div class="abs" style="left:43.3px;top:543.39px;font-size:11px;line-height:15px;color:#111;white-space:nowrap;-webkit-text-stroke:.2px #111">Total</div>
<div class="num" style="left:161.3px;top:542.59px">$</div>
<div class="num" style="right:683.3px;top:542.59px">43,104</div>
<div class="num" style="left:252.5px;top:542.59px">$</div>
<div class="num" style="right:591.9px;top:542.59px">43,080</div>
<div class="num" style="left:343.9px;top:542.59px">$</div>
<div class="num" style="right:500.7px;top:542.59px">42,588</div>
<div class="num" style="left:435.1px;top:542.59px">$</div>
<div class="num" style="right:409.3px;top:542.59px">28,705</div>
<div class="num" style="left:526.5px;top:542.59px">$</div>
<div class="num" style="right:317.90000000000003px;top:542.59px">44,183</div>
<div class="num" style="left:617.9px;top:542.59px">$</div>
<div class="num" style="right:226.50000000000006px;top:542.59px">43,776</div>
<div class="num" style="left:709.3px;top:542.59px">$</div>
<div class="num" style="right:135.3px;top:542.59px">245,436</div>
<svg class="abs" style="left:425.1px;top:467.74px" width="4" height="4" viewBox="0 0 4 4"><path d="M0 0h4v4z" fill="#d0021b"/></svg>
<svg class="abs" style="left:516.5px;top:467.74px" width="4" height="4" viewBox="0 0 4 4"><path d="M0 0h4v4z" fill="#d0021b"/></svg>
<svg class="abs" style="left:516.5px;top:482.81px" width="4" height="4" viewBox="0 0 4 4"><path d="M0 0h4v4z" fill="#d0021b"/></svg>
<svg class="abs" style="left:516.5px;top:543.09px" width="4" height="4" viewBox="0 0 4 4"><path d="M0 0h4v4z" fill="#d0021b"/></svg>
<svg class="abs" style="left:699.3px;top:452.67px" width="4" height="4" viewBox="0 0 4 4"><path d="M0 0h4v4z" fill="#d0021b"/></svg>
<svg class="abs" style="left:795px;top:430px" width="140" height="130" viewBox="1070 430 140 130"><polyline points="1083.1,438.3 1106.4,439.8 1129.5,439.5 1153.1,448.8 1176.4,438.6 1199.8,439.3" fill="none" stroke="#3d618f" stroke-width="1.350"/><circle cx="1083.1" cy="438.3" r="1.500" fill="#c0141c"/><circle cx="1106.4" cy="439.8" r="1.500" fill="#c0141c"/><circle cx="1129.5" cy="439.5" r="1.500" fill="#c0141c"/><circle cx="1153.1" cy="448.8" r="1.500" fill="#c0141c"/><circle cx="1176.4" cy="438.6" r="1.500" fill="#c0141c"/><circle cx="1199.8" cy="439.3" r="1.500" fill="#c0141c"/><polyline points="1083.1,464 1106.4,454.8 1129.5,458.8 1153.1,454.3 1176.4,455.5 1199.8,456" fill="none" stroke="#3d618f" stroke-width="1.350"/><circle cx="1083.1" cy="464" r="1.500" fill="#c0141c"/><circle cx="1106.4" cy="454.8" r="1.500" fill="#c0141c"/><circle cx="1129.5" cy="458.8" r="1.500" fill="#c0141c"/><circle cx="1153.1" cy="454.3" r="1.500" fill="#c0141c"/><circle cx="1176.4" cy="455.5" r="1.500" fill="#c0141c"/><circle cx="1199.8" cy="456" r="1.500" fill="#c0141c"/><polyline points="1083.1,474.3 1106.4,476.9 1129.5,470.2 1153.1,468.8 1176.4,468.8 1199.8,478.1" fill="none" stroke="#3d618f" stroke-width="1.350"/><circle cx="1083.1" cy="474.3" r="1.500" fill="#c0141c"/><circle cx="1106.4" cy="476.9" r="1.500" fill="#c0141c"/><circle cx="1129.5" cy="470.2" r="1.500" fill="#c0141c"/><circle cx="1153.1" cy="468.8" r="1.500" fill="#c0141c"/><circle cx="1176.4" cy="468.8" r="1.500" fill="#c0141c"/><circle cx="1199.8" cy="478.1" r="1.500" fill="#c0141c"/><polyline points="1083.1,492.1 1106.4,492.9 1129.5,491 1153.1,493.1 1176.4,489.5 1199.8,484" fill="none" stroke="#3d618f" stroke-width="1.350"/><circle cx="1083.1" cy="492.1" r="1.500" fill="#c0141c"/><circle cx="1106.4" cy="492.9" r="1.500" fill="#c0141c"/><circle cx="1129.5" cy="491" r="1.500" fill="#c0141c"/><circle cx="1153.1" cy="493.1" r="1.500" fill="#c0141c"/><circle cx="1176.4" cy="489.5" r="1.500" fill="#c0141c"/><circle cx="1199.8" cy="484" r="1.500" fill="#c0141c"/><polyline points="1083.1,499.5 1106.4,503.1 1129.5,506.7 1153.1,498.8 1176.4,507.9 1199.8,501.2" fill="none" stroke="#3d618f" stroke-width="1.350"/><circle cx="1083.1" cy="499.5" r="1.500" fill="#c0141c"/><circle cx="1106.4" cy="503.1" r="1.500" fill="#c0141c"/><circle cx="1129.5" cy="506.7" r="1.500" fill="#c0141c"/><circle cx="1153.1" cy="498.8" r="1.500" fill="#c0141c"/><circle cx="1176.4" cy="507.9" r="1.500" fill="#c0141c"/><circle cx="1199.8" cy="501.2" r="1.500" fill="#c0141c"/><polyline points="1083.1,524 1106.4,518.1 1129.5,517.9 1153.1,514.3 1176.4,520 1199.8,515.7" fill="none" stroke="#3d618f" stroke-width="1.350"/><circle cx="1083.1" cy="524" r="1.500" fill="#c0141c"/><circle cx="1106.4" cy="518.1" r="1.500" fill="#c0141c"/><circle cx="1129.5" cy="517.9" r="1.500" fill="#c0141c"/><circle cx="1153.1" cy="514.3" r="1.500" fill="#c0141c"/><circle cx="1176.4" cy="520" r="1.500" fill="#c0141c"/><circle cx="1199.8" cy="515.7" r="1.500" fill="#c0141c"/><polyline points="1083.1,538.1 1106.4,536.9 1129.5,528.8 1153.1,536 1176.4,537.4 1199.8,537.9" fill="none" stroke="#3d618f" stroke-width="1.350"/><circle cx="1083.1" cy="538.1" r="1.500" fill="#c0141c"/><circle cx="1106.4" cy="536.9" r="1.500" fill="#c0141c"/><circle cx="1129.5" cy="528.8" r="1.500" fill="#c0141c"/><circle cx="1153.1" cy="536" r="1.500" fill="#c0141c"/><circle cx="1176.4" cy="537.4" r="1.500" fill="#c0141c"/><circle cx="1199.8" cy="537.9" r="1.500" fill="#c0141c"/><polyline points="1083.1,544.5 1106.4,544.5 1129.5,544.5 1153.1,553.1 1176.4,544.5 1199.8,544.3" fill="none" stroke="#3d618f" stroke-width="1.350"/><circle cx="1083.1" cy="544.5" r="1.500" fill="#c0141c"/><circle cx="1106.4" cy="544.5" r="1.500" fill="#c0141c"/><circle cx="1129.5" cy="544.5" r="1.500" fill="#c0141c"/><circle cx="1153.1" cy="553.1" r="1.500" fill="#c0141c"/><circle cx="1176.4" cy="544.5" r="1.500" fill="#c0141c"/><circle cx="1199.8" cy="544.3" r="1.500" fill="#c0141c"/></svg>
<svg class="abs" style="left:105px;top:185px" width="275" height="230" viewBox="380 185 275 230"><defs><radialGradient id="pg" cx="50%" cy="50%" r="50%"><stop offset="0.800" stop-color="#000" stop-opacity="0"/><stop offset="1" stop-color="#000" stop-opacity=".035"/></radialGradient><filter id="ps" x="-20%" y="-20%" width="140%" height="140%"><feGaussianBlur stdDeviation="2.500"/></filter></defs><circle cx="489.2" cy="313.4" r="79.4" fill="#000" opacity=".22" filter="url(#ps)"/><path d="M487.7,310.9L487.70,231.50A79.4,79.4 0 0 1 544.61,366.26Z" fill="#ffcb0f" stroke="#fff6e0" stroke-width="1.300" stroke-linejoin="round"/><path d="M487.7,310.9L544.61,366.26A79.4,79.4 0 0 1 505.85,388.20Z" fill="#f8941d" stroke="#fff6e0" stroke-width="1.300" stroke-linejoin="round"/><path d="M487.7,310.9L505.85,388.20A79.4,79.4 0 0 1 440.55,374.78Z" fill="#cd8b3e" stroke="#fff6e0" stroke-width="1.300" stroke-linejoin="round"/><path d="M487.7,310.9L440.55,374.78A79.4,79.4 0 0 1 408.41,315.09Z" fill="#ec7117" stroke="#fff6e0" stroke-width="1.300" stroke-linejoin="round"/><path d="M487.7,310.9L408.41,315.09A79.4,79.4 0 0 1 408.84,301.64Z" fill="#e5481f" stroke="#fff6e0" stroke-width="1.300" stroke-linejoin="round"/><path d="M487.7,310.9L408.84,301.64A79.4,79.4 0 0 1 454.44,238.80Z" fill="#9c6a69" stroke="#fff6e0" stroke-width="1.300" stroke-linejoin="round"/><path d="M487.7,310.9L454.44,238.80A79.4,79.4 0 0 1 487.70,231.50Z" fill="#9a790b" stroke="#fff6e0" stroke-width="1.300" stroke-linejoin="round"/><circle cx="487.7" cy="310.9" r="79.4" fill="url(#pg)"/></svg>
<div class="pl" style="left:212px;top:190px;font-size:13px;line-height:15px;color:#333">Categories</div>
<div class="pl" style="left:184.2px;top:207.15px;color:#222">Other<br>7%</div>
<div class="pl" style="left:310.6px;top:255.65px;color:#222">Rent and<br>Utilities<br>37%</div>
<div class="pl" style="left:279.7px;top:385.75px;color:#222">Equipment<br>9%</div>
<div class="pl" style="left:179.9px;top:391.95px;color:#222">Marketing<br>14%</div>
<div class="pl" style="left:110.9px;top:346.25px;color:#222">Freelancers<br>14%</div>
<div class="pl" style="left:112.1px;top:297.65px;color:#222">Travel<br>3%</div>
<div class="pl" style="left:129.3px;top:243.15px;color:#efefef">Taxes<br>16%</div>
<div class="abs" style="left:457px;top:243.9px;width:53.6px;height:148.5px;background:#ffcb0f;box-shadow:2.500px 1px 4px rgba(0,0,0,.22)"></div>
<div class="abs" style="left:536.7px;top:243.9px;width:54.0px;height:148.5px;background:#ffcb0f;box-shadow:2.500px 1px 4px rgba(0,0,0,.22)"></div>
<div class="abs" style="left:615.9px;top:246.2px;width:53.5px;height:146.2px;background:#cd8b3e;box-shadow:2.500px 1px 4px rgba(0,0,0,.22)"></div>
<div class="abs" style="left:695.5px;top:293.4px;width:53.1px;height:99.0px;background:#ec7117;box-shadow:2.500px 1px 4px rgba(0,0,0,.22)"></div>
<div class="abs" style="left:774.7px;top:239.9px;width:53.6px;height:152.5px;background:#e5481f;box-shadow:2.500px 1px 4px rgba(0,0,0,.22)"></div>
<div class="abs" style="left:854px;top:241.7px;width:53.0px;height:150.7px;background:#9c6a69;box-shadow:2.500px 1px 4px rgba(0,0,0,.22)"></div>
<div class="cl" style="left:483.8px;top:404.300px">2009</div>
<div class="cl" style="left:563.7px;top:404.300px">2010</div>
<div class="cl" style="left:642.65px;top:404.300px">2011</div>
<div class="cl" style="left:722.05px;top:404.300px">2012</div>
<div class="cl" style="left:801.5px;top:404.300px">2013</div>
<div class="cl" style="left:880.5px;top:404.300px">2014</div>
<div class="abs" style="right:492px;top:214.10px;font-size:9.700px;line-height:11px;color:#333;white-space:nowrap">$50,000</div>
<div class="abs" style="right:492px;top:231.38px;font-size:9.700px;line-height:11px;color:#333;white-space:nowrap">$45,000</div>
<div class="abs" style="right:492px;top:248.66px;font-size:9.700px;line-height:11px;color:#333;white-space:nowrap">$40,000</div>
<div class="abs" style="right:492px;top:265.94px;font-size:9.700px;line-height:11px;color:#333;white-space:nowrap">$35,000</div>
<div class="abs" style="right:492px;top:283.22px;font-size:9.700px;line-height:11px;color:#333;white-space:nowrap">$30,000</div>
<div class="abs" style="right:492px;top:300.50px;font-size:9.700px;line-height:11px;color:#333;white-space:nowrap">$25,000</div>
<div class="abs" style="right:492px;top:317.78px;font-size:9.700px;line-height:11px;color:#333;white-space:nowrap">$20,000</div>
<div class="abs" style="right:492px;top:335.06px;font-size:9.700px;line-height:11px;color:#333;white-space:nowrap">$15,000</div>
<div class="abs" style="right:492px;top:352.34px;font-size:9.700px;line-height:11px;color:#333;white-space:nowrap">$10,000</div>
<div class="abs" style="right:492px;top:369.62px;font-size:9.700px;line-height:11px;color:#333;white-space:nowrap">$5,000</div>
<div class="abs" style="right:496.5px;top:386.90px;font-size:9.700px;line-height:11px;color:#333;white-space:nowrap">$-</div>
</div>
<div id="phone">
<div class="abs" style="left:0;top:0;right:0;bottom:-40px;border-radius:60px;border:0 solid #c4c4c4;border-top:2px solid #c4c4c4"></div>
<div class="abs" style="left:3.200px;top:2.500px;right:3.200px;bottom:-40px;border-radius:57px;border:2px solid #f2f2f2;border-top:0 solid #f2f2f2;border-bottom:0"></div>
<div class="abs" style="left:8px;top:5px;right:8px;bottom:-40px;border-radius:52px;border:6px solid transparent;border-top:0 solid transparent;border-bottom:0;background:linear-gradient(90deg,#161616 0,#a6a6a6 .55%,#909090 .95%,#1c1c1c 1.700%,#000 2%,#000 98%,#1c1c1c 98.300%,#909090 99.050%,#a6a6a6 99.450%,#161616 100%) border-box;-webkit-mask:linear-gradient(#000 0 0) padding-box exclude,linear-gradient(#000 0 0);mask:linear-gradient(#000 0 0) padding-box exclude,linear-gradient(#000 0 0)"></div>
</div>
<div class="abs" style="left:0.500px;top:225.500px;width:3.500px;height:31px;background:#2c2c2c;border-radius:1.500px 0 0 1.500px"></div>
<div class="abs" style="left:0.500px;top:281px;width:3.500px;height:51px;background:#2c2c2c;border-radius:1.500px 0 0 1.500px"></div>
<div class="abs" style="left:0.500px;top:345px;width:3.500px;height:51px;background:#2c2c2c;border-radius:1.500px 0 0 1.500px"></div>
<div class="abs" style="left:369.500px;top:288px;width:3px;height:54px;background:#333;border-radius:0 1.500px 1.500px 0"></div>
<div class="abs" style="left:125.700px;top:175.800px;width:7px;height:7px;border-radius:50%;background:radial-gradient(circle at 50% 50%,#2a3f8f 0,#101a4a 45%,#0a0a14 75%,#000 100%)"></div>
<div class="abs" style="left:154.500px;top:176.800px;width:64.500px;height:5px;border-radius:2.500px;background:#1c1c1c"></div>
<div id="scr">
<div class="abs" style="left:0;top:0;width:320px;height:51.8px;background:#217346"></div>
<div class="pt" style="left:5.2px;top:3px;font-size:8.700px;line-height:11px;color:#fff;-webkit-text-stroke:.3px #fff;letter-spacing:0">iPhone</div>
<svg class="abs" style="left:36px;top:3.5px" width="12" height="9" viewBox="0 0 12 9">
<path d="M1 3.400a7.200 7.200 0 0 1 10 0" fill="none" stroke="#fff" stroke-width="1.400" stroke-linecap="round"/>
<path d="M3 5.500a4.300 4.300 0 0 1 6 0" fill="none" stroke="#fff" stroke-width="1.400" stroke-linecap="round"/>
<circle cx="6" cy="7.600" r="1.100" fill="#fff"/></svg>
<div class="pt" style="left:159.8px;top:3px;transform:translateX(-50%);font-size:8.700px;line-height:11px;color:#fff;-webkit-text-stroke:.3px #fff;letter-spacing:0">2:30 PM</div>
<svg class="abs" style="left:258.5px;top:3.3px" width="6" height="10" viewBox="0 0 6 10"><path d="M.6 2.800 5 7 2.800 9.200V.8L5 3 .6 7.200" fill="none" stroke="#fff" stroke-width=".9" stroke-linejoin="round"/></svg>
<div class="pt" style="left:268.5px;top:3px;font-size:8.700px;line-height:11px;color:#fff;-webkit-text-stroke:.3px #fff;letter-spacing:0">100%</div>
<div class="abs" style="left:296.5px;top:4.7px;width:16.500px;height:7px;background:#fff;border-radius:1px"></div>
<div class="abs" style="left:313.8px;top:6.8px;width:1.300px;height:2.800px;background:#fff;border-radius:0 1px 1px 0"></div>
<div class="pt" style="left:159.8px;top:18.7px;transform:translateX(-50%);font-size:8px;line-height:10px;color:#a9d3b8;letter-spacing:-.1px">Contoso Expenses</div>
<svg class="abs" style="left:10.5px;top:30.5px" width="12" height="18" viewBox="0 0 12 18"><path d="M10.500 1 2 9l8.500 8" fill="none" stroke="#fff" stroke-width="2.200"/></svg>
<svg class="abs" style="left:170.5px;top:31.5px" width="16" height="15" viewBox="0 0 16 15">
<path d="M6 1 1.500 5.300 6 9.600" fill="none" stroke="#fff" stroke-width="1.500"/><path d="M1.800 5.300H10a4.300 4.300 0 0 1 0 8.600H8.600" fill="none" stroke="#fff" stroke-width="1.500"/></svg>
<svg class="abs" style="left:203.5px;top:30.5px" width="17" height="17" viewBox="0 0 17 17">
<path d="M1 13 5.600 1.500h.8L9.500 9" fill="none" stroke="#fff" stroke-width="1.500"/><path d="M2.800 9h5" stroke="#fff" stroke-width="1.400"/>
<path d="M15.500 4.500 7 14.200l-3 1.600 1.300-3.200L13.800 3z" fill="none" stroke="#fff" stroke-width="1.400" stroke-linejoin="round"/></svg>
<svg class="abs" style="left:236px;top:31.5px" width="16" height="16" viewBox="0 0 16 16"><circle cx="6.500" cy="6.500" r="5.200" fill="none" stroke="#fff" stroke-width="1.600"/><path d="M10.300 10.300 15 15" stroke="#fff" stroke-width="1.700"/></svg>
<svg class="abs" style="left:268.5px;top:31px" width="18" height="16" viewBox="0 0 18 16">
<path d="M4.500 7H1.200v8h12.600v-3.500" fill="none" stroke="#fff" stroke-width="1.500"/>
<path d="M4.500 12.500c.6-4.300 3.200-6.500 7-6.700V2.600L17 7.300l-5.500 4.700V8.800c-3-.2-5.300.9-7 3.700z" fill="none" stroke="#fff" stroke-width="1.500" stroke-linejoin="round"/></svg>
<div class="abs" style="left:295.1px;top:38.2px;width:2.800px;height:2.800px;border-radius:50%;background:#fff"></div>
<div class="abs" style="left:301.5px;top:38.2px;width:2.800px;height:2.800px;border-radius:50%;background:#fff"></div>
<div class="abs" style="left:307.90000000000003px;top:38.2px;width:2.800px;height:2.800px;border-radius:50%;background:#fff"></div>
<div class="abs" style="left:0;top:51.8px;width:320px;height:30.19999999999999px;background:#f1f1f1"></div>
<div class="abs" style="left:4.8px;top:57px;width:309.5px;height:20.600px;background:#fff;border-radius:2.500px;border:.5px solid #e4e4e4"></div>
<div class="abs" style="left:35.5px;top:59px;width:.7px;height:17px;background:#e0e0e0"></div>
<div class="pt" style="left:14px;top:56.5px;font-family:'Liberation Serif',serif;font-style:italic;font-size:17px;line-height:20px;color:#333">f<span style="font-size:13.500px;margin-left:-.5px">x</span></div>
<svg class="abs" style="left:301px;top:63.5px" width="9" height="6" viewBox="0 0 9 6"><path d="M.8.800 4.500 4.600 8.200.8" fill="none" stroke="#333" stroke-width="1.300"/></svg>
<div class="abs" style="left:0;top:82px;width:320px;height:17px;background:#efefef"></div>
<div class="pt" style="left:55.6px;top:85.5px;transform:translateX(-50%);font-size:7.500px;font-weight:bold;line-height:9px;color:#222">A</div>
<div class="abs" style="left:26.9px;top:83px;width:.7px;height:16px;background:#dadada"></div>
<div class="pt" style="left:106.25px;top:85.5px;transform:translateX(-50%);font-size:7.500px;font-weight:bold;line-height:9px;color:#222">B</div>
<div class="abs" style="left:83.7px;top:83px;width:.7px;height:16px;background:#dadada"></div>
<div class="pt" style="left:150.5px;top:85.5px;transform:translateX(-50%);font-size:7.500px;font-weight:bold;line-height:9px;color:#222">C</div>
<div class="abs" style="left:128.2px;top:83px;width:.7px;height:16px;background:#dadada"></div>
<div class="pt" style="left:194.75px;top:85.5px;transform:translateX(-50%);font-size:7.500px;font-weight:bold;line-height:9px;color:#222">D</div>
<div class="abs" style="left:172.2px;top:83px;width:.7px;height:16px;background:#dadada"></div>
<div class="pt" style="left:239.0px;top:85.5px;transform:translateX(-50%);font-size:7.500px;font-weight:bold;line-height:9px;color:#1e6b2e">E</div>
<div class="abs" style="left:216.7px;top:83px;width:.7px;height:16px;background:#dadada"></div>
<div class="pt" style="left:290.25px;top:85.5px;transform:translateX(-50%);font-size:7.500px;font-weight:bold;line-height:9px;color:#222">F</div>
<div class="abs" style="left:260.7px;top:83px;width:.7px;height:16px;background:#dadada"></div>
<div class="abs" style="left:0;top:99px;width:27.2px;height:320px;background:#efefef"></div>
<div class="prn" style="top:107.20px">1</div>
<div class="abs" style="left:0;top:117.80px;width:320px;height:.6px;background:#e2e2e2"></div>
<div class="prn" style="top:118.00px">2</div>
<div class="abs" style="left:0;top:126.99px;width:320px;height:.6px;background:#e2e2e2"></div>
<div class="prn" style="top:126.97px">3</div>
<div class="abs" style="left:0;top:135.96px;width:320px;height:.6px;background:#e2e2e2"></div>
<div class="prn" style="top:135.94px">4</div>
<div class="abs" style="left:0;top:144.93px;width:320px;height:.6px;background:#e2e2e2"></div>
<div class="prn" style="top:144.91px">5</div>
<div class="abs" style="left:0;top:153.90px;width:320px;height:.6px;background:#e2e2e2"></div>
<div class="prn" style="top:153.88px">6</div>
<div class="abs" style="left:0;top:162.87px;width:320px;height:.6px;background:#e2e2e2"></div>
<div class="prn" style="top:162.85px">7</div>
<div class="abs" style="left:0;top:171.84px;width:320px;height:.6px;background:#e2e2e2"></div>
<div class="prn" style="top:171.82px">8</div>
<div class="abs" style="left:0;top:180.81px;width:320px;height:.6px;background:#e2e2e2"></div>
<div class="prn" style="top:180.79px">9</div>
<div class="abs" style="left:0;top:189.78px;width:320px;height:.6px;background:#e2e2e2"></div>
<div class="prn" style="top:189.76px">10</div>
<div class="abs" style="left:0;top:198.75px;width:320px;height:.6px;background:#e2e2e2"></div>
<div class="prn" style="top:198.73px">11</div>
<div class="abs" style="left:0;top:207.72px;width:320px;height:.6px;background:#e2e2e2"></div>
<div class="prn" style="top:207.70px">12</div>
<div class="abs" style="left:0;top:216.69px;width:320px;height:.6px;background:#e2e2e2"></div>
<div class="prn" style="top:216.67px">13</div>
<div class="abs" style="left:0;top:225.66px;width:320px;height:.6px;background:#e2e2e2"></div>
<div class="prn" style="top:225.64px">14</div>
<div class="abs" style="left:0;top:234.62px;width:320px;height:.6px;background:#e2e2e2"></div>
<div class="prn" style="top:234.61px">15</div>
<div class="abs" style="left:0;top:243.60px;width:320px;height:.6px;background:#e2e2e2"></div>
<div class="prn" style="top:243.58px">16</div>
<div class="abs" style="left:0;top:252.57px;width:320px;height:.6px;background:#e2e2e2"></div>
<div class="prn" style="top:252.55px">17</div>
<div class="abs" style="left:0;top:261.54px;width:320px;height:.6px;background:#e2e2e2"></div>
<div class="prn" style="top:261.52px">18</div>
<div class="abs" style="left:0;top:270.50px;width:320px;height:.6px;background:#e2e2e2"></div>
<div class="prn" style="top:270.49px">19</div>
<div class="abs" style="left:0;top:279.48px;width:320px;height:.6px;background:#e2e2e2"></div>
<div class="prn" style="top:279.46px">20</div>
<div class="abs" style="left:0;top:288.45px;width:320px;height:.6px;background:#e2e2e2"></div>
<div class="prn" style="top:288.43px">21</div>
<div class="abs" style="left:0;top:297.42px;width:320px;height:.6px;background:#e2e2e2"></div>
<div class="prn" style="top:297.40px">22</div>
<div class="abs" style="left:0;top:306.38px;width:320px;height:.6px;background:#e2e2e2"></div>
<div class="prn" style="top:306.37px">23</div>
<div class="abs" style="left:0;top:315.36px;width:320px;height:.6px;background:#e2e2e2"></div>
<div class="prn" style="top:315.34px">24</div>
<div class="abs" style="left:0;top:324.33px;width:320px;height:.6px;background:#e2e2e2"></div>
<div class="prn" style="top:324.31px">25</div>
<div class="abs" style="left:0;top:333.29px;width:320px;height:.6px;background:#e2e2e2"></div>
<div class="prn" style="top:333.28px">26</div>
<div class="abs" style="left:0;top:342.26px;width:320px;height:.6px;background:#e2e2e2"></div>
<div class="prn" style="top:342.25px">27</div>
<div class="abs" style="left:0;top:351.24px;width:320px;height:.6px;background:#e2e2e2"></div>
<div class="prn" style="top:351.22px">28</div>
<div class="abs" style="left:0;top:360.21px;width:320px;height:.6px;background:#e2e2e2"></div>
<div class="prn" style="top:360.19px">29</div>
<div class="abs" style="left:0;top:369.18px;width:320px;height:.6px;background:#e2e2e2"></div>
<div class="prn" style="top:369.16px">30</div>
<div class="abs" style="left:0;top:378.15px;width:320px;height:.6px;background:#e2e2e2"></div>
<div class="prn" style="top:378.13px">31</div>
<div class="abs" style="left:0;top:387.12px;width:320px;height:.6px;background:#e2e2e2"></div>
<div class="prn" style="top:387.10px">32</div>
<div class="abs" style="left:0;top:396.09px;width:320px;height:.6px;background:#e2e2e2"></div>
<div class="prn" style="top:396.07px">33</div>
<div class="abs" style="left:0;top:405.05px;width:320px;height:.6px;background:#e2e2e2"></div>
<div class="prn" style="top:405.04px">34</div>
<div class="abs" style="left:0;top:414.02px;width:320px;height:.6px;background:#e2e2e2"></div>
<div class="abs" style="left:83.7px;top:99px;width:.6px;height:320px;background:#e2e2e2"></div>
<div class="abs" style="left:128.2px;top:99px;width:.6px;height:320px;background:#e2e2e2"></div>
<div class="abs" style="left:172.2px;top:99px;width:.6px;height:320px;background:#e2e2e2"></div>
<div class="abs" style="left:216.7px;top:99px;width:.6px;height:320px;background:#e2e2e2"></div>
<div class="abs" style="left:260.7px;top:99px;width:.6px;height:320px;background:#e2e2e2"></div>
<div class="abs" style="left:26.9px;top:99px;width:.6px;height:320px;background:#cfcfcf"></div>
<div class="abs" style="left:27.2px;top:98.8px;width:300px;height:17px;background:#107c10"></div>
<div class="pt" style="left:29.3px;top:100.3px;font-size:10.650px;line-height:13px;color:#fff;letter-spacing:-.1px">Contoso Expenses</div>
<div class="abs" style="left:27.8px;top:119.5px;width:289.7px;height:145.5px;background:#fff;border:.6px solid #d9d9d9"></div>
<div class="abs" style="left:74.4px;top:193px;width:40.5px;height:56.2px;background:#4472c4;box-shadow:1.500px .5px 2.500px rgba(0,0,0,.2)"></div>
<div class="pt" style="left:94.65px;top:254.3px;transform:translateX(-50%);font-size:6.700px;line-height:7px;color:#555">2012</div>
<div class="abs" style="left:135.9px;top:193.5px;width:40.9px;height:55.7px;background:#ed7d31;box-shadow:1.500px .5px 2.500px rgba(0,0,0,.2)"></div>
<div class="pt" style="left:156.35px;top:254.3px;transform:translateX(-50%);font-size:6.700px;line-height:7px;color:#555">2013</div>
<div class="abs" style="left:196.3px;top:211.6px;width:41.0px;height:37.6px;background:#a5a5a5;box-shadow:1.500px .5px 2.500px rgba(0,0,0,.2)"></div>
<div class="pt" style="left:216.8px;top:254.3px;transform:translateX(-50%);font-size:6.700px;line-height:7px;color:#555">2014</div>
<div class="abs" style="left:257.8px;top:160.1px;width:41.4px;height:89.1px;background:#ffc000;box-shadow:1.500px .5px 2.500px rgba(0,0,0,.2)"></div>
<div class="pt" style="left:278.5px;top:254.3px;transform:translateX(-50%);font-size:6.700px;line-height:7px;color:#555">2015</div>
<div class="abs" style="left:66px;top:249.2px;width:240px;height:.6px;background:#d9d9d9"></div>
<div class="pt" style="left:32.5px;top:140.90px;font-size:6.800px;line-height:7px;color:#555">$44,500</div>
<div class="pt" style="left:32.5px;top:158.45px;font-size:6.800px;line-height:7px;color:#555">$44,000</div>
<div class="pt" style="left:32.5px;top:176.00px;font-size:6.800px;line-height:7px;color:#555">$43,500</div>
<div class="pt" style="left:32.5px;top:193.55px;font-size:6.800px;line-height:7px;color:#555">$43,000</div>
<div class="pt" style="left:32.5px;top:211.10px;font-size:6.800px;line-height:7px;color:#555">$42,500</div>
<div class="pt" style="left:32.5px;top:228.65px;font-size:6.800px;line-height:7px;color:#555">$42,000</div>
<div class="pt" style="left:32.5px;top:246.20px;font-size:6.800px;line-height:7px;color:#555">$41,500</div>
<div class="abs" style="left:27.5px;top:279.48px;width:290.0px;height:8.97px;background:#d9e1f2"></div>
<div class="abs" style="left:27.5px;top:297.41px;width:290.0px;height:8.97px;background:#d9e1f2"></div>
<div class="abs" style="left:27.5px;top:315.36px;width:290.0px;height:8.97px;background:#d9e1f2"></div>
<div class="abs" style="left:27.5px;top:333.29px;width:290.0px;height:8.97px;background:#d9e1f2"></div>
<div class="abs" style="left:27.5px;top:269.9px;width:290.0px;height:1.7px;background:#7f98bd"></div>
<div class="abs" style="left:27.5px;top:279.2px;width:290.0px;height:1.1px;background:#7f98bd"></div>
<div class="abs" style="left:27.5px;top:350.5px;width:290.0px;height:1.4px;background:#7f98bd"></div>
<div class="pc" style="left:29px;top:270.49px;font-weight:bold;color:#111">Category</div>
<div class="pc" style="right:194.50px;top:270.49px;font-weight:bold;color:#111">2012</div>
<div class="pc" style="right:150.50px;top:270.49px;font-weight:bold;color:#111">2013</div>
<div class="pc" style="right:106.00px;top:270.49px;font-weight:bold;color:#111">2014</div>
<div class="pc" style="right:62.00px;top:270.49px;font-weight:bold;color:#111">2015</div>
<div class="pc" style="left:289.5px;top:270.49px;font-weight:bold;color:#111;transform:translateX(-50%);font-size:6.200px">Trends</div>
<div class="pc" style="left:29px;top:279.46px">Rent and Utilities</div>
<div class="pc" style="left:86.80px;top:279.46px">$</div>
<div class="pc" style="right:194.50px;top:279.46px">18,840</div>
<div class="pc" style="left:131.30px;top:279.46px">$</div>
<div class="pc" style="right:150.50px;top:279.46px">17,628</div>
<div class="pc" style="left:175.30px;top:279.46px">$</div>
<div class="pc" style="right:106.00px;top:279.46px">16,368</div>
<div class="pc" style="left:219.80px;top:279.46px">$</div>
<div class="pc" style="right:62.00px;top:279.46px">1,885</div>
<div class="pc" style="left:29px;top:288.43px">Equipment</div>
<div class="pc" style="left:86.80px;top:288.43px">$</div>
<div class="pc" style="right:194.50px;top:288.43px">3,000</div>
<div class="pc" style="left:131.30px;top:288.43px">$</div>
<div class="pc" style="right:150.50px;top:288.43px">3,972</div>
<div class="pc" style="left:175.30px;top:288.43px">$</div>
<div class="pc" style="right:106.00px;top:288.43px">3,588</div>
<div class="pc" style="left:219.80px;top:288.43px">$</div>
<div class="pc" style="right:62.00px;top:288.43px">4,025</div>
<div class="pc" style="left:29px;top:297.40px">Marketing</div>
<div class="pc" style="left:86.80px;top:297.40px">$</div>
<div class="pc" style="right:194.50px;top:297.40px">5,556</div>
<div class="pc" style="left:131.30px;top:297.40px">$</div>
<div class="pc" style="right:150.50px;top:297.40px">5,424</div>
<div class="pc" style="left:175.30px;top:297.40px">$</div>
<div class="pc" style="right:106.00px;top:297.40px">5,784</div>
<div class="pc" style="left:219.80px;top:297.40px">$</div>
<div class="pc" style="right:62.00px;top:297.40px">5,883</div>
<div class="pc" style="left:29px;top:306.37px">Freelancers</div>
<div class="pc" style="left:86.80px;top:306.37px">$</div>
<div class="pc" style="right:194.50px;top:306.37px">5,604</div>
<div class="pc" style="left:131.30px;top:306.37px">$</div>
<div class="pc" style="right:150.50px;top:306.37px">5,556</div>
<div class="pc" style="left:175.30px;top:306.37px">$</div>
<div class="pc" style="right:106.00px;top:306.37px">5,700</div>
<div class="pc" style="left:219.80px;top:306.37px">$</div>
<div class="pc" style="right:62.00px;top:306.37px">5,438</div>
<div class="pc" style="left:29px;top:315.34px">Travel</div>
<div class="pc" style="left:86.80px;top:315.34px">$</div>
<div class="pc" style="right:194.50px;top:315.34px">1,476</div>
<div class="pc" style="left:131.30px;top:315.34px">$</div>
<div class="pc" style="right:150.50px;top:315.34px">1,104</div>
<div class="pc" style="left:175.30px;top:315.34px">$</div>
<div class="pc" style="right:106.00px;top:315.34px">696</div>
<div class="pc" style="left:219.80px;top:315.34px">$</div>
<div class="pc" style="right:62.00px;top:315.34px">1,595</div>
<div class="pc" style="left:29px;top:324.31px">Taxes</div>
<div class="pc" style="left:86.80px;top:324.31px">$</div>
<div class="pc" style="right:194.50px;top:324.31px">6,168</div>
<div class="pc" style="left:131.30px;top:324.31px">$</div>
<div class="pc" style="right:150.50px;top:324.31px">6,672</div>
<div class="pc" style="left:175.30px;top:324.31px">$</div>
<div class="pc" style="right:106.00px;top:324.31px">6,732</div>
<div class="pc" style="left:219.80px;top:324.31px">$</div>
<div class="pc" style="right:62.00px;top:324.31px">7,032</div>
<div class="pc" style="left:29px;top:333.28px">Other</div>
<div class="pc" style="left:86.80px;top:333.28px">$</div>
<div class="pc" style="right:194.50px;top:333.28px">2,460</div>
<div class="pc" style="left:131.30px;top:333.28px">$</div>
<div class="pc" style="right:150.50px;top:333.28px">2,724</div>
<div class="pc" style="left:175.30px;top:333.28px">$</div>
<div class="pc" style="right:106.00px;top:333.28px">3,720</div>
<div class="pc" style="left:219.80px;top:333.28px">$</div>
<div class="pc" style="right:62.00px;top:333.28px">2,847</div>
<div class="pc" style="left:29px;top:342.25px;font-weight:bold;color:#000">Total</div>
<div class="pc" style="left:86.80px;top:342.25px;font-weight:bold;color:#000">$</div>
<div class="pc" style="right:194.50px;top:342.25px;font-weight:bold;color:#000">43,104</div>
<div class="pc" style="left:131.30px;top:342.25px;font-weight:bold;color:#000">$</div>
<div class="pc" style="right:150.50px;top:342.25px;font-weight:bold;color:#000">43,080</div>
<div class="pc" style="left:175.30px;top:342.25px;font-weight:bold;color:#000">$</div>
<div class="pc" style="right:106.00px;top:342.25px;font-weight:bold;color:#000">42,588</div>
<div class="pc" style="left:219.80px;top:342.25px;font-weight:bold;color:#000">$</div>
<div class="pc" style="right:62.00px;top:342.25px;font-weight:bold;color:#000">28,705</div>
<svg class="abs" style="left:263px;top:273px" width="56" height="82" viewBox="290 500 56 82"><polyline points="296.1,507.5 310,511 324.3,513.8 338.6,509.6" fill="none" stroke="#5b7fb5" stroke-width=".8"/><circle cx="296.1" cy="507.5" r=".8" fill="#d22"/><circle cx="310" cy="511" r=".8" fill="#d22"/><circle cx="324.3" cy="513.8" r=".8" fill="#d22"/><circle cx="338.6" cy="509.6" r=".8" fill="#d22"/><polyline points="296.1,522.8 310,516.7 324.3,519.5 338.6,516.7" fill="none" stroke="#5b7fb5" stroke-width=".8"/><circle cx="296.1" cy="522.8" r=".8" fill="#d22"/><circle cx="310" cy="516.7" r=".8" fill="#d22"/><circle cx="324.3" cy="519.5" r=".8" fill="#d22"/><circle cx="338.6" cy="516.7" r=".8" fill="#d22"/><polyline points="296.1,530.4 310,531.5 324.3,526.6 338.6,525.2" fill="none" stroke="#5b7fb5" stroke-width=".8"/><circle cx="296.1" cy="530.4" r=".8" fill="#d22"/><circle cx="310" cy="531.5" r=".8" fill="#d22"/><circle cx="324.3" cy="526.6" r=".8" fill="#d22"/><circle cx="338.6" cy="525.2" r=".8" fill="#d22"/><polyline points="296.1,538.4 310,540.9 324.3,534.8 338.6,540.5" fill="none" stroke="#5b7fb5" stroke-width=".8"/><circle cx="296.1" cy="538.4" r=".8" fill="#d22"/><circle cx="310" cy="540.9" r=".8" fill="#d22"/><circle cx="324.3" cy="534.8" r=".8" fill="#d22"/><circle cx="338.6" cy="540.5" r=".8" fill="#d22"/><polyline points="296.1,544.3 310,546.8 324.3,549 338.6,543.3" fill="none" stroke="#5b7fb5" stroke-width=".8"/><circle cx="296.1" cy="544.3" r=".8" fill="#d22"/><circle cx="310" cy="546.8" r=".8" fill="#d22"/><circle cx="324.3" cy="549" r=".8" fill="#d22"/><circle cx="338.6" cy="543.3" r=".8" fill="#d22"/><polyline points="296.1,558 310,555.1 324.3,554.2 338.6,552.5" fill="none" stroke="#5b7fb5" stroke-width=".8"/><circle cx="296.1" cy="558" r=".8" fill="#d22"/><circle cx="310" cy="555.1" r=".8" fill="#d22"/><circle cx="324.3" cy="554.2" r=".8" fill="#d22"/><circle cx="338.6" cy="552.5" r=".8" fill="#d22"/><polyline points="296.1,567.5 310,565.6 324.3,561.4 338.6,567.5" fill="none" stroke="#5b7fb5" stroke-width=".8"/><circle cx="296.1" cy="567.5" r=".8" fill="#d22"/><circle cx="310" cy="565.6" r=".8" fill="#d22"/><circle cx="324.3" cy="561.4" r=".8" fill="#d22"/><circle cx="338.6" cy="567.5" r=".8" fill="#d22"/><polyline points="296.1,574.6 310,575 324.3,576.7 338.6,570.6" fill="none" stroke="#5b7fb5" stroke-width=".8"/><circle cx="296.1" cy="574.6" r=".8" fill="#d22"/><circle cx="310" cy="575" r=".8" fill="#d22"/><circle cx="324.3" cy="576.7" r=".8" fill="#d22"/><circle cx="338.6" cy="570.6" r=".8" fill="#d22"/></svg>
<svg class="abs" style="left:163px;top:353px" width="64" height="24" viewBox="190 580 64 24"><path d="M205 586.800H244.600V590M199.100 592V595.700H238.500" fill="none" stroke="#217346" stroke-width="1.300"/><circle cx="199.100" cy="586.800" r="3.700" fill="#217346"/><circle cx="243.900" cy="595.700" r="3.700" fill="#217346"/></svg>
</div>
</body></html>
